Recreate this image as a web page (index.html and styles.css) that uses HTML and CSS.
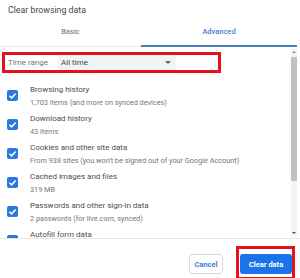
FILE: index.html
```html
<!DOCTYPE html>
<html lang="en">
<head>
    <meta charset="UTF-8">
    <title>Clear browsing data</title>
    <link rel="stylesheet" href="styles.css">
</head>
<body>
    <div class="dialog">
        <h1 class="title">Clear browsing data</h1>
        <div class="tabs">
            <div class="tab">Basic</div>
            <div class="tab tab-active">Advanced</div>
        </div>

        <div class="panel">
            <div class="content">
                <div class="range-row">
                    <span class="range-label">Time range</span>
                    <div class="select">
                        <span>All time</span>
                        <span class="caret"></span>
                    </div>
                </div>

                <ul class="items">
                    <li class="item">
                        <span class="checkbox"><svg viewBox="0 0 10 10"><path d="M2.2 5.2 L4.2 7.1 L7.9 3.1"/></svg></span>
                        <div>
                            <div class="item-title">Browsing history</div>
                            <div class="item-sub">1,703 items (and more on synced devices)</div>
                        </div>
                    </li>
                    <li class="item">
                        <span class="checkbox"><svg viewBox="0 0 10 10"><path d="M2.2 5.2 L4.2 7.1 L7.9 3.1"/></svg></span>
                        <div>
                            <div class="item-title">Download history</div>
                            <div class="item-sub">43 items</div>
                        </div>
                    </li>
                    <li class="item">
                        <span class="checkbox"><svg viewBox="0 0 10 10"><path d="M2.2 5.2 L4.2 7.1 L7.9 3.1"/></svg></span>
                        <div>
                            <div class="item-title">Cookies and other site data</div>
                            <div class="item-sub">From 938 sites (you won't be signed out of your Google Account)</div>
                        </div>
                    </li>
                    <li class="item">
                        <span class="checkbox"><svg viewBox="0 0 10 10"><path d="M2.2 5.2 L4.2 7.1 L7.9 3.1"/></svg></span>
                        <div>
                            <div class="item-title">Cached images and files</div>
                            <div class="item-sub">319 MB</div>
                        </div>
                    </li>
                    <li class="item">
                        <span class="checkbox"><svg viewBox="0 0 10 10"><path d="M2.2 5.2 L4.2 7.1 L7.9 3.1"/></svg></span>
                        <div>
                            <div class="item-title">Passwords and other sign-in data</div>
                            <div class="item-sub">2 passwords (for live.com, synced)</div>
                        </div>
                    </li>
                    <li class="item">
                        <span class="checkbox"><svg viewBox="0 0 10 10"><path d="M2.2 5.2 L4.2 7.1 L7.9 3.1"/></svg></span>
                        <div>
                            <div class="item-title">Autofill form data</div>
                            <div class="item-sub">&nbsp;</div>
                        </div>
                    </li>
                </ul>
            </div>

            <div class="scrollbar">
                <span class="arrow arrow-up"></span>
                <div class="track"><div class="thumb"></div></div>
                <span class="arrow arrow-down"></span>
            </div>
        </div>

        <div class="footer">
            <button class="btn btn-cancel">Cancel</button>
            <div class="highlight-btn">
                <button class="btn btn-primary">Clear data</button>
            </div>
        </div>
    </div>
</body>
</html>
```

FILE: styles.css
```css
body {
    margin: 0;
    padding: 0;
    background-color: #ffffff;
    font-family: Roboto, "Liberation Sans", sans-serif;
    color: #3c4043;
}

.dialog {
    width: 300px;
    height: 278px;
    overflow: hidden;
}

.title {
    margin: 0;
    padding: 4px 0 0 8px;
    height: 17px;
    font-size: 8.8px;
    font-weight: 400;
    line-height: 13px;
    color: #44474b;
}

.tabs {
    display: flex;
    width: 297px;
    height: 25px;
    border-bottom: 1px solid #e8eaed;
}

.tab {
    width: 141px;
    text-align: center;
    font-size: 7.5px;
    font-weight: 500;
    line-height: 22px;
    color: #80868b;
}

.tab-active {
    flex: 1;
    color: #3b7ed8;
    border-bottom: 2px solid #4a7fc1;
    margin-bottom: -1px;
}

.panel {
    display: flex;
    height: 192px;
    border-bottom: 1px solid #e3e5e8;
    box-sizing: border-box;
}

.content {
    flex: 1;
    overflow: hidden;
}

.range-row {
    display: flex;
    align-items: stretch;
    width: 219px;
    height: 21px;
    margin: 5px 0 0 2px;
    border: 3px solid #e5111c;
    box-sizing: border-box;
}

.range-label {
    width: 50px;
    padding-left: 3px;
    font-size: 8px;
    line-height: 15px;
    color: #6f7378;
}

.select {
    display: flex;
    align-items: center;
    justify-content: space-between;
    width: 118px;
    padding: 0 5px 0 3px;
    box-sizing: border-box;
    background-color: #f1f3f4;
    font-size: 8px;
    color: #44474b;
}

.caret {
    width: 0;
    height: 0;
    border-left: 3px solid transparent;
    border-right: 3px solid transparent;
    border-top: 3px solid #5f6368;
}

.items {
    list-style: none;
    margin: 8px 0 0 0;
    padding: 0;
}

.item {
    display: flex;
    align-items: center;
    height: 29px;
    padding-left: 7px;
}

.checkbox {
    display: flex;
    width: 11px;
    height: 11px;
    margin-right: 12px;
    border-radius: 2px;
    background-color: #2a78e0;
    flex-shrink: 0;
}

.checkbox svg {
    width: 11px;
    height: 11px;
}

.checkbox path {
    fill: none;
    stroke: #ffffff;
    stroke-width: 1.4;
}

.item-title {
    font-size: 8px;
    line-height: 13px;
    color: #4a4d51;
    white-space: nowrap;
}

.item-sub {
    font-size: 7.3px;
    line-height: 13px;
    color: #74787d;
    white-space: nowrap;
}

.scrollbar {
    display: flex;
    flex-direction: column;
    align-items: center;
    width: 6px;
    margin: 2px 3px 2px 0;
    background-color: #f3f3f3;
}

.arrow {
    width: 0;
    height: 0;
    margin: 2px 0;
    border-left: 2px solid transparent;
    border-right: 2px solid transparent;
}

.arrow-up {
    border-bottom: 2px solid #8a8a8a;
}

.arrow-down {
    border-top: 2px solid #505050;
}

.track {
    flex: 1;
    width: 100%;
}

.thumb {
    height: 124px;
    margin-top: 2px;
    background-color: #c1c1c1;
}

.footer {
    display: flex;
    justify-content: flex-end;
    align-items: flex-start;
    padding: 7px 5px 0 0;
}

.btn {
    height: 20px;
    font-family: Roboto, "Liberation Sans", sans-serif;
    font-size: 7.5px;
    font-weight: 700;
    border-radius: 3px;
    cursor: pointer;
}

.btn-cancel {
    width: 34px;
    margin: 8px 13px 0 0;
    padding: 0;
    background-color: #ffffff;
    border: 1px solid #dadce0;
    color: #3b7ed8;
}

.btn-primary {
    width: 52px;
    padding: 0;
    background-color: #1a73e8;
    border: none;
    color: #ffffff;
}

.highlight-btn {
    display: flex;
    padding: 5px 0 3px 1px;
    border: 3px solid #e5111c;
}
```
